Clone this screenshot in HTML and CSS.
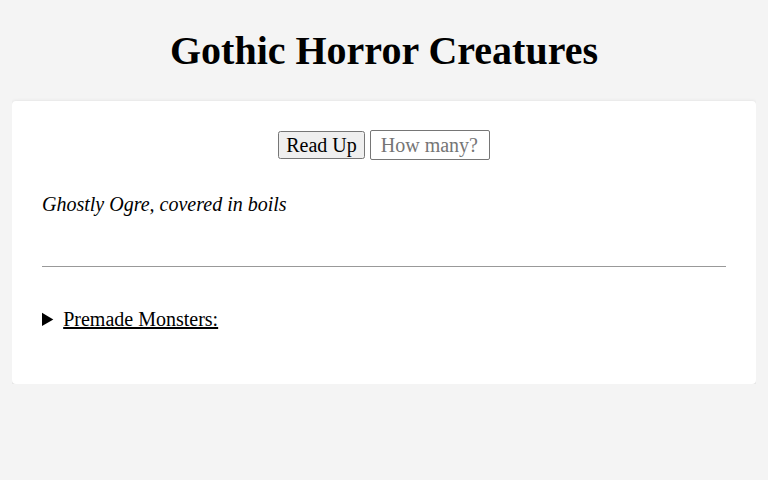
FILE: index.html
```html
<!DOCTYPE html>
<html>
<head>
    <title>Gothic Horror Creatures</title>
    <link rel="stylesheet" href="styles.css">
</head>
<body>
    <h1>Gothic Horror Creatures</h1>
    <div class="card">
        <div class="controls">
            <button>Read Up</button>
            <input type="text" placeholder="How many?">
        </div>
        <p class="result">Ghostly Ogre, covered in boils</p>
        <hr>
        <details>
            <summary><span>Premade Monsters:</span></summary>
        </details>
    </div>
</body>
</html>
```

FILE: styles.css
```css
body {
    font-family: "Liberation Serif", serif;
    font-size: 20px;
    background: #f4f4f4;
    margin: 0 12px;
    color: #000;
}
h1 {
    font-size: 40px;
    text-align: center;
    margin: 27px 0 27px;
}
.card {
    background: #fff;
    border-radius: 4px;
    box-shadow: 0 1px 4px rgba(0, 0, 0, 0.15);
    padding: 29px 30px 30px;
}
.controls {
    display: flex;
    justify-content: center;
    align-items: center;
    gap: 5px;
}
button {
    font-family: inherit;
    font-size: 20px;
    padding: 1px 6px;
    height: 28px;
    line-height: 22px;
}
input {
    font-family: inherit;
    font-size: 20px;
    width: 120px;
    height: 30px;
    box-sizing: border-box;
    padding: 2px 10px;
    border: 1px solid #767676;
    border-radius: 2px;
}
.result {
    font-style: italic;
    margin: 33px 0 50px;
}
hr {
    border: none;
    border-top: 1px solid #999;
    margin: 0;
}
details {
    margin-top: 41px;
    margin-bottom: 23px;
}
summary span {
    text-decoration: underline;
}
```
